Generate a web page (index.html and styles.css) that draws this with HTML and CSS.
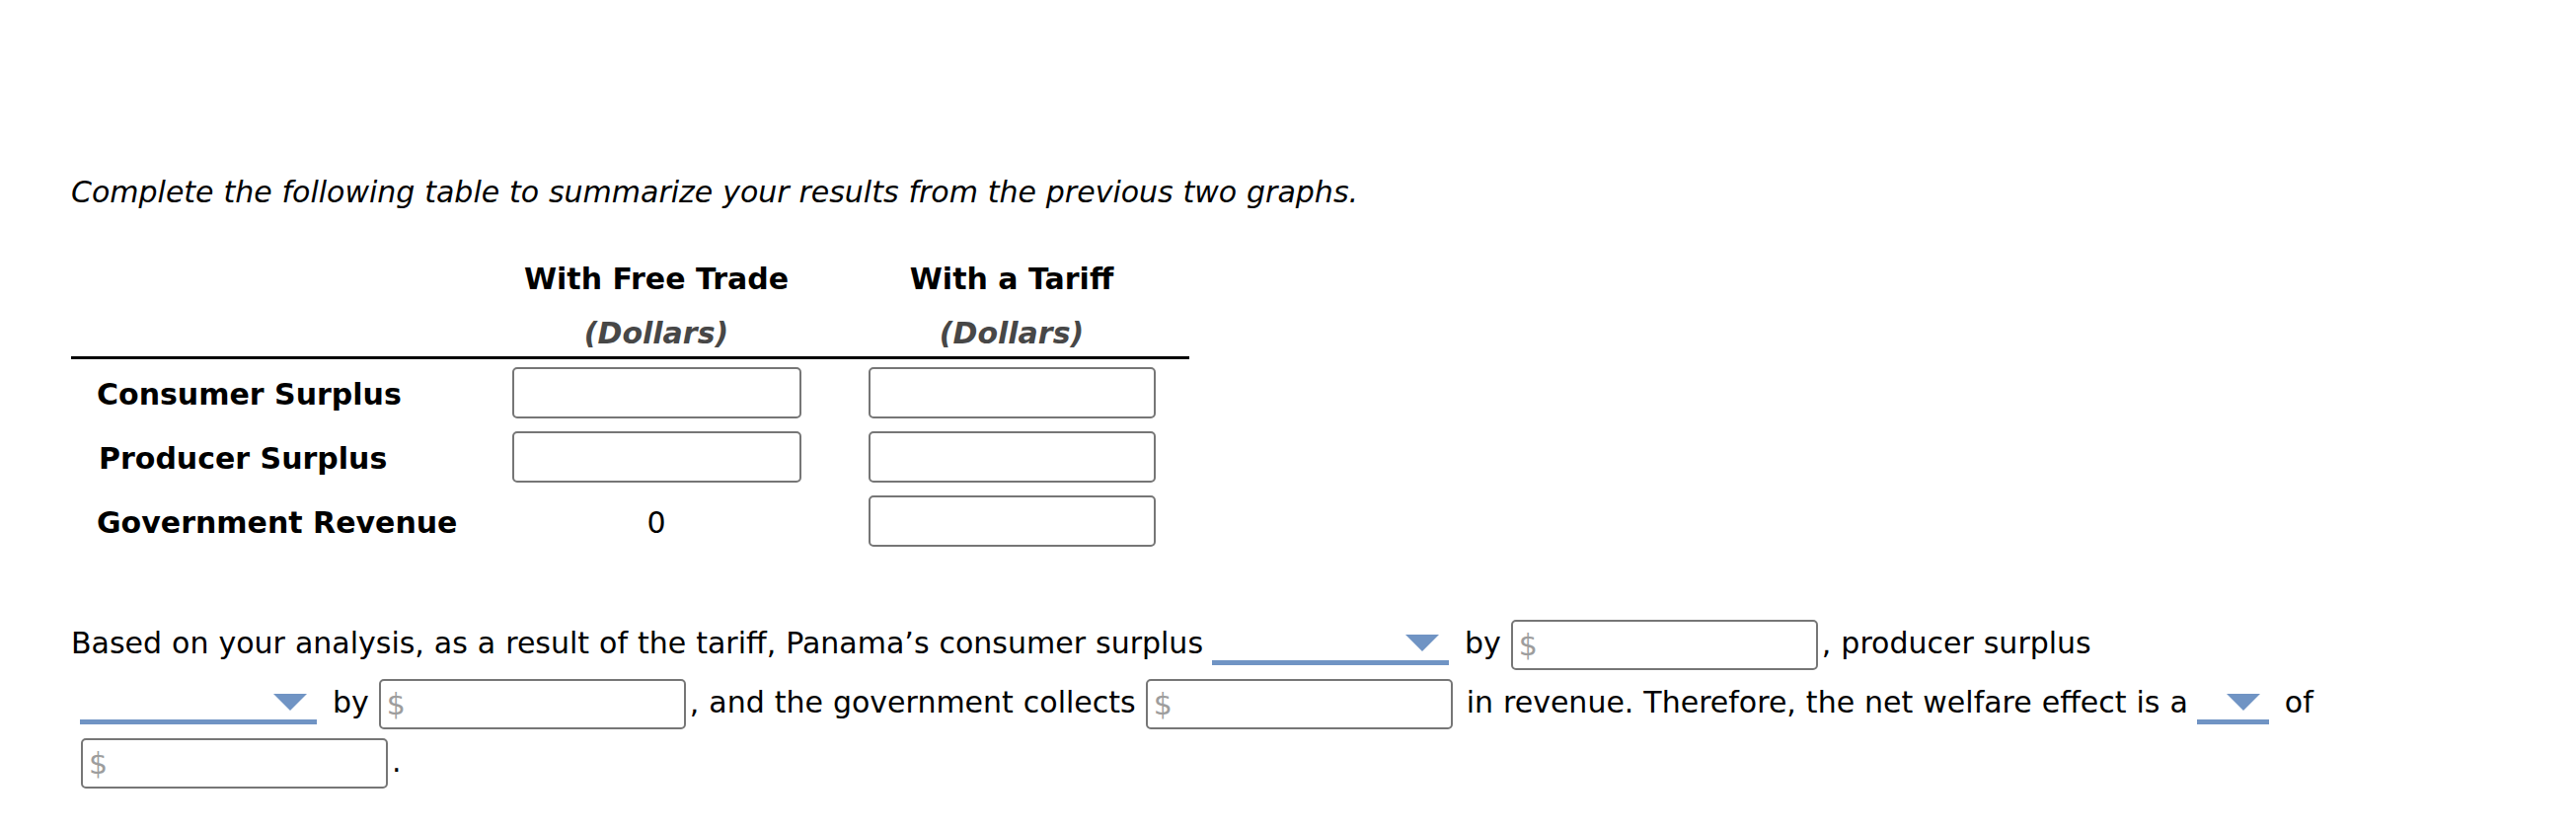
FILE: index.html
```html
<!DOCTYPE html>
<html lang="en">
<head>
<meta charset="utf-8">
<title>Tariff summary</title>
<link rel="stylesheet" href="styles.css">
</head>
<body>
<div class="page">
  <p class="intro">Complete the following table to summarize your results from the previous two graphs.</p>

  <div class="table">
    <div class="thead">
      <div class="hcell"></div>
      <div class="hcell">With Free Trade</div>
      <div class="hcell col-b">With a Tariff</div>
      <div class="hcell"></div>
      <div class="hcell unit">(Dollars)</div>
      <div class="hcell unit col-b">(Dollars)</div>
    </div>
    <div class="tbody">
      <div class="label">Consumer Surplus</div>
      <div class="cell"><input class="box" type="text"></div>
      <div class="cell col-b"><input class="box" type="text"></div>

      <div class="label label-shift">Producer Surplus</div>
      <div class="cell"><input class="box" type="text"></div>
      <div class="cell col-b"><input class="box" type="text"></div>

      <div class="label">Government Revenue</div>
      <div class="cell value">0</div>
      <div class="cell col-b"><input class="box" type="text"></div>
    </div>
  </div>

  <p class="summary">Based on your analysis, as a result of the tariff, Panama’s consumer surplus<span class="dropdown"><span class="caret"></span></span> by<input class="blank" type="text" placeholder="$">, producer surplus<br><span class="dropdown"><span class="caret"></span></span> by<input class="blank" type="text" placeholder="$">, and the government collects<input class="blank" type="text" placeholder="$"> in revenue. Therefore, the net welfare effect is a<span class="dropdown short"><span class="caret"></span></span> of<br><input class="blank" type="text" placeholder="$">.</p>
</div>
</body>
</html>
```

FILE: styles.css
```css
html, body {
  background: #ffffff;
}

body {
  margin: 0;
  font-family: "DejaVu Sans", Verdana, sans-serif;
  font-size: 30px;
  color: #000000;
}

.page {
  padding: 175px 0 0 72px;
}

.intro {
  margin: 0;
  font-style: italic;
  line-height: 40px;
  word-spacing: 0.3px;
}

.table {
  margin-top: 41px;
  width: 1133px;
}

.thead,
.tbody {
  display: grid;
  grid-template-columns: 428px 330px 375px;
}

.thead {
  grid-auto-rows: 50px;
  row-gap: 5px;
  border-bottom: 3px solid #000000;
  font-weight: bold;
}

.hcell {
  line-height: 50px;
  padding-top: 2px;
  box-sizing: border-box;
  text-align: center;
  white-space: nowrap;
}

.hcell.unit {
  font-style: italic;
  color: #474747;
}

.col-b {
  padding-left: 15px;
}

.tbody {
  grid-auto-rows: 52px;
  row-gap: 13px;
  padding-top: 8px;
}

.label {
  display: flex;
  align-items: center;
  padding: 3px 0 0 26px;
  font-weight: bold;
  white-space: nowrap;
}

.label-shift {
  padding-left: 28px;
}

.cell {
  display: flex;
  align-items: center;
  justify-content: center;
}

.value {
  padding-top: 3px;
  font-weight: normal;
}

.box {
  box-sizing: border-box;
  width: 293px;
  height: 52px;
  margin: 0;
  padding: 0 8px;
  border: 2px solid #767676;
  border-radius: 5px;
  background: #ffffff;
  font: inherit;
}

.col-b .box {
  width: 291px;
}

.summary {
  margin: 68px 0 0;
  line-height: 60px;
  width: 2500px;
  word-spacing: 0.45px;
}

.dropdown {
  display: inline-flex;
  justify-content: flex-end;
  align-items: flex-start;
  box-sizing: border-box;
  width: 240px;
  height: 40px;
  margin: 0 6px 0 9px;
  padding: 9px 10px 0 0;
  border-bottom: 5px solid #7094c4;
  vertical-align: middle;
}

.dropdown.short {
  width: 73px;
  padding-right: 9px;
}

.caret {
  width: 0;
  height: 0;
  border-left: 17px solid transparent;
  border-right: 17px solid transparent;
  border-top: 17px solid #7094c4;
}

.blank {
  box-sizing: border-box;
  width: 311px;
  height: 51px;
  margin: 0 4px 0 10px;
  padding: 0 6px;
  border: 2px solid #767676;
  border-radius: 5px;
  background: #ffffff;
  font: inherit;
  color: #000000;
  vertical-align: middle;
}

.blank::placeholder {
  color: #9d9d9d;
  opacity: 1;
}
```
